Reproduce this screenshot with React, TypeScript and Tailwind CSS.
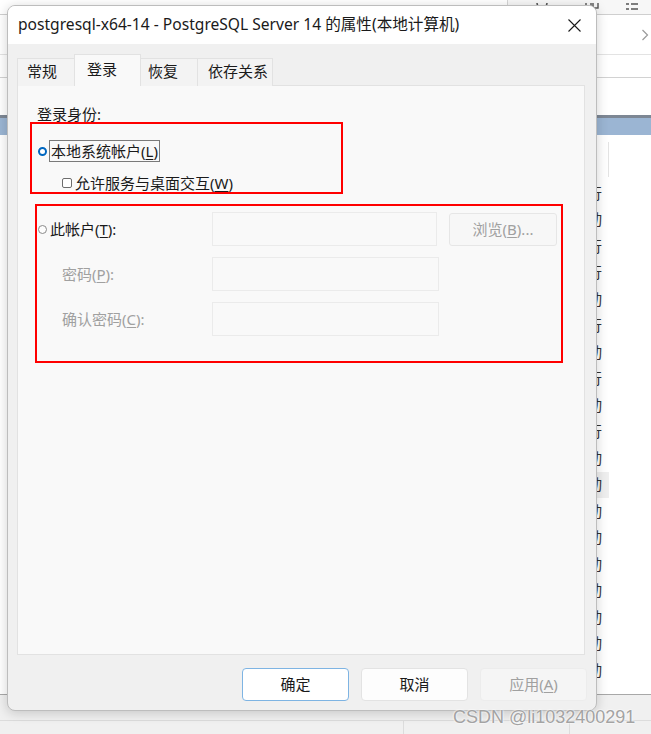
import React from "react";

const uiFont = { fontFamily: '"Noto Sans", "Noto Sans CJK SC", sans-serif' };

function Key({ children }: { children: React.ReactNode }) {
  return <span className="underline decoration-1 underline-offset-2">{children}</span>;
}

// Column of the services list that peeks out on the right of the dialog
const listGlyphs = ["行", "动", "行", "行", "动", "行", "动", "行", "动", "行", "动", "动", "动", "动", "动", "动", "动", "动", "动"];

function HostWindow() {
  return (
    <div className="flex h-full flex-col">
      {/* toolbar */}
      <div className="flex h-[15px] border-b border-[#cfcfcf]">
        <div className="w-[507px]" />
        <div className="flex flex-1 items-end border-l border-[#d5d5d5] bg-[#f7f7f7] pb-[3px] pl-[27px]">
          <svg width="14" height="8" viewBox="0 0 14 8" className="text-[#555]">
            <path d="M2 0 A5 5 0 0 0 12 0" fill="none" stroke="currentColor" strokeWidth="1.6" />
          </svg>
          <svg width="14" height="8" viewBox="0 0 14 8" className="ml-[36px] text-[#555]">
            <rect x="1" y="-3" width="5" height="8" fill="none" stroke="currentColor" strokeWidth="1.4" />
            <rect x="8" y="-3" width="5" height="8" fill="none" stroke="currentColor" strokeWidth="1.4" />
          </svg>
          <svg width="14" height="8" viewBox="0 0 14 8" className="ml-[26px] text-[#555]">
            <path d="M1 1h3M6 1h7M1 6h3M6 6h7" stroke="currentColor" strokeWidth="1.5" />
          </svg>
        </div>
      </div>
      {/* address row */}
      <div className="flex h-[40px] items-center justify-end border-b border-[#e3e3e3] pr-[2px]">
        <svg width="8" height="12" viewBox="0 0 8 12">
          <path d="M1.5 1 L6.5 6 L1.5 11" fill="none" stroke="#9a9a9a" strokeWidth="1.2" />
        </svg>
      </div>
      <div className="h-[23px] border-b border-[#d2d2d2]" />
      <div className="h-[37px]" />
      {/* selected row band */}
      <div className="h-[3px] bg-[#7d8794]" />
      <div className="h-[17px] bg-[#9bb5d3]" />
      {/* column header */}
      <div className="flex h-[45px]">
        <div className="w-[608px]" />
        <div className="mt-[7px] h-[35px] w-px bg-[#e3e3e3]" />
      </div>
      {/* service rows */}
      <div className="flex flex-col">
        {listGlyphs.map((g, i) => (
          <div key={i} className="flex h-[26.5px] text-[15px] leading-none text-[#333]">
            <div
              className={
                "ml-[560px] flex w-[49px] items-center pl-[27px] " + (i === 11 ? "bg-[#efefef]" : "")
              }
            >
              {g}
            </div>
          </div>
        ))}
      </div>
      <div className="h-[10px]" />
      {/* status area */}
      <div className="flex flex-1 flex-col border-t border-[#a8a8a8] bg-[#f0f0f0]">
        <div className="h-[26px] border-b border-[#dcdcdc]" />
        <div className="flex flex-1">
          <div className="w-[404px] border-r border-[#dcdcdc]" />
          <div className="w-[166px] border-r border-[#dcdcdc]" />
        </div>
      </div>
    </div>
  );
}

function Tab({ label, active, cls }: { label: string; active?: boolean; cls: string }) {
  if (active) {
    return (
      <div
        className={
          "relative z-10 flex h-[32px] items-center border border-b-0 border-[#e2e2e2] bg-[#f9f9f9] pb-[3px] " + cls
        }
      >
        {label}
      </div>
    );
  }
  return (
    <div className={"flex h-[28px] items-center border border-b-0 border-[#e2e2e2] bg-[#f3f3f3] pb-[3px] " + cls}>
      {label}
    </div>
  );
}

function Dialog() {
  return (
    <div className="absolute left-[7px] top-[5px] flex h-[706px] w-[590px] flex-col overflow-hidden rounded-[8px] border border-[#bdbdbd] bg-[#f0f0f0] shadow-[0_2px_12px_rgba(0,0,0,0.18)]">
      {/* title bar */}
      <div className="flex h-[38px] items-center justify-between bg-white pl-[10px] pr-[15px] text-[15.6px] text-[#1a1a1a]">
        <span>postgresql-x64-14 - PostgreSQL Server 14 的属性(本地计算机)</span>
        <svg width="13" height="13" viewBox="0 0 13 13">
          <path d="M0.5 0.5 L12.5 12.5 M12.5 0.5 L0.5 12.5" stroke="#1a1a1a" strokeWidth="1.1" />
        </svg>
      </div>

      {/* body */}
      <div className="flex flex-1 flex-col pl-[9px] pt-[10px] text-[15px] text-[#1a1a1a]">
        <div className="relative z-10 -mb-px flex h-[32px] items-end">
          <Tab label="常规" cls="w-[58px] pl-[9px]" />
          <Tab label="登录" cls="-ml-px w-[67px] pl-[12px]" active />
          <Tab label="恢复" cls="-ml-px w-[58px] pl-[7px]" />
          <Tab label="依存关系" cls="-ml-px w-[76px] pl-[10px]" />
        </div>

        <div className="flex h-[570px] w-[568px] flex-col border border-[#e2e2e2] bg-[#f9f9f9] pl-[19px] pt-[18px]">
          <div className="h-[20px] leading-[20px]">登录身份:</div>

          {/* local system account */}
          <div className="mt-[16px] flex h-[22px] items-center">
            <span className="ml-px box-border h-[9px] w-[9px] rounded-full border-[2.5px] border-[#0067c0] bg-white" />
            <span className="ml-[2px] flex h-[22px] items-center border border-[#7a7a7a] pl-px pr-[1px] leading-none">
              本地系统帐户(<Key>L</Key>)
            </span>
          </div>
          <div className="mt-[11px] flex h-[20px] items-center pl-[25px]">
            <span className="box-border h-[10px] w-[10px] rounded-[2px] border border-[#6d6d6d] bg-white" />
            <span className="ml-[3px] leading-none">
              允许服务与桌面交互(<Key>W</Key>)
            </span>
          </div>

          {/* this account */}
          <div className="mt-[19px] grid grid-cols-[175px_237px_110px] gap-y-[11px]">
            <div className="flex h-[34px] items-center">
              <span className="ml-px box-border h-[9px] w-[9px] rounded-full border border-[#8a8a8a] bg-[#fdfdfd]" />
              <span className="ml-[3px]">
                此帐户(<Key>T</Key>):
              </span>
            </div>
            <div className="h-[34px] w-[225px] border border-[#ebebeb] bg-[#f9f9f9]" />
            <div className="mt-px flex h-[33px] w-[108px] items-center justify-center rounded-[3px] border border-[#e6e6e6] bg-[#f7f7f7] text-[#a0a0a0]">
              浏览(<Key>B</Key>)...
            </div>

            <div className="flex h-[34px] items-center pl-[25px] text-[#a0a0a0]">
              密码(<Key>P</Key>):
            </div>
            <div className="h-[34px] w-[227px] border border-[#ebebeb] bg-[#f9f9f9]" />
            <div />

            <div className="flex h-[34px] items-center pl-[25px] text-[#a0a0a0]">
              确认密码(<Key>C</Key>):
            </div>
            <div className="h-[34px] w-[227px] border border-[#ebebeb] bg-[#f9f9f9]" />
            <div />
          </div>
        </div>

        {/* dialog buttons */}
        <div className="mt-[13px] flex justify-end gap-[12px] pr-[9px]">
          <button className="flex h-[33px] w-[107px] items-center justify-center rounded-[4px] border border-[#7eb4e3] bg-white text-[#1a1a1a]">
            确定
          </button>
          <button className="flex h-[33px] w-[107px] items-center justify-center rounded-[4px] border border-[#e3e3e3] bg-[#fdfdfd] text-[#1a1a1a]">
            取消
          </button>
          <button className="flex h-[33px] w-[107px] items-center justify-center rounded-[4px] border border-[#ececec] bg-[#f5f5f5] text-[#a0a0a0]">
            应用(<Key>A</Key>)
          </button>
        </div>
      </div>
    </div>
  );
}

export default function App() {
  return (
    <div className="relative h-[734px] w-[651px] overflow-hidden bg-white" style={uiFont}>
      <HostWindow />
      <Dialog />

      {/* red annotation frames */}
      <div className="absolute left-[30px] top-[122px] h-[72px] w-[313px] border-2 border-[#ff0000]" />
      <div className="absolute left-[35px] top-[204px] h-[159px] w-[528px] border-2 border-[#ff0000]" />

      {/* watermark */}
      <div
        className="absolute left-[453px] top-[706px] text-[18px] leading-[22px] text-[#a3a3a3] [text-shadow:0_0_2px_#fff,0_0_2px_#fff]"
        style={{ fontFamily: '"Liberation Sans", Arial, sans-serif' }}
      >
        CSDN @li1032400291
      </div>
    </div>
  );
}
